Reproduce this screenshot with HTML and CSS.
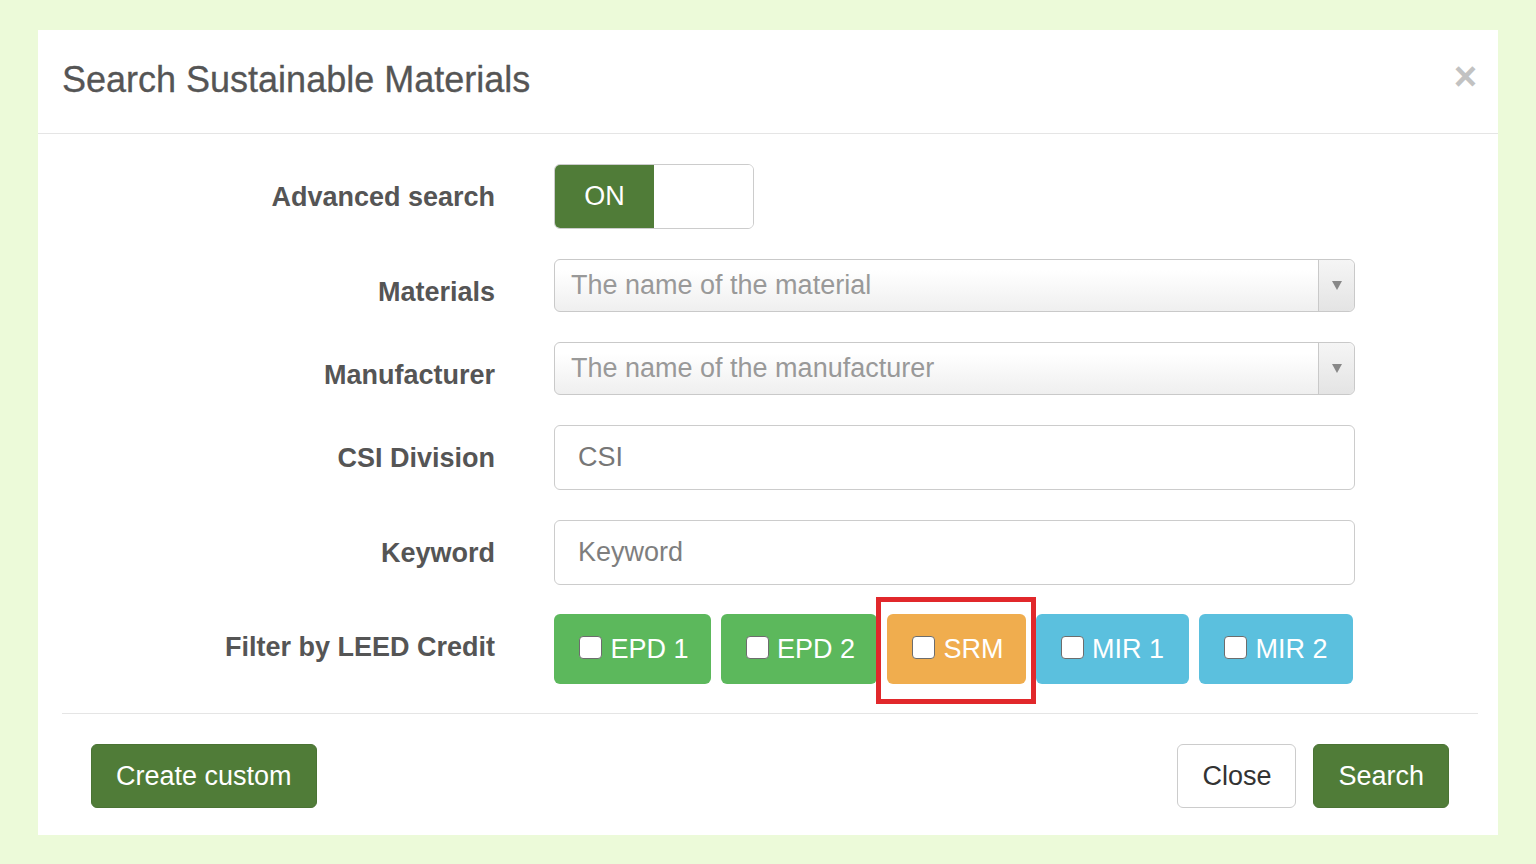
FILE: index.html
```html
<!DOCTYPE html>
<html>
<head>
<meta charset="utf-8">
<title>Search Sustainable Materials</title>
<link rel="stylesheet" href="styles.css">
</head>
<body>
<div class="modal">
  <div class="modal-header">
    <h4 class="modal-title">Search Sustainable Materials</h4>
    <span class="close">&times;</span>
  </div>

  <div class="modal-body">
    <div class="form-row">
      <label class="form-label">Advanced search</label>
      <div class="switch">
        <span class="switch-on">ON</span>
        <span class="switch-off"></span>
      </div>
    </div>

    <div class="form-row">
      <label class="form-label">Materials</label>
      <div class="select">
        <span class="select-text">The name of the material</span>
        <span class="select-arrow"><span class="caret"></span></span>
      </div>
    </div>

    <div class="form-row">
      <label class="form-label">Manufacturer</label>
      <div class="select">
        <span class="select-text">The name of the manufacturer</span>
        <span class="select-arrow"><span class="caret"></span></span>
      </div>
    </div>

    <div class="form-row">
      <label class="form-label">CSI Division</label>
      <input class="form-control" type="text" value="CSI">
    </div>

    <div class="form-row">
      <label class="form-label">Keyword</label>
      <input class="form-control" type="text" placeholder="Keyword">
    </div>

    <div class="form-row last">
      <label class="form-label">Filter by LEED Credit</label>
      <div class="filters">
        <label class="btn-check btn-success"><input type="checkbox"> EPD 1</label>
        <label class="btn-check btn-success"><input type="checkbox"> EPD 2</label>
        <label class="btn-check btn-warning marked"><input type="checkbox"> SRM</label>
        <label class="btn-check btn-info wide"><input type="checkbox"> MIR 1</label>
        <label class="btn-check btn-info wide"><input type="checkbox"> MIR 2</label>
      </div>
    </div>

    <hr class="divider">
  </div>

  <div class="modal-footer">
    <button class="btn btn-primary">Create custom</button>
    <div class="footer-right">
      <button class="btn btn-default">Close</button>
      <button class="btn btn-primary">Search</button>
    </div>
  </div>
</div>
</body>
</html>
```

FILE: styles.css
```css
/* Search dialog */

body
{ margin: 0;
background-color: #ecfad9;
font-family: "Liberation Sans", Arial, Helvetica, sans-serif;
font-size: 27px;
color: #555;
}

div.modal
{ margin: 30px 0 0 38px;
width: 1460px;
background-color: #fff;
}

div.modal-header
{ display: flex;
justify-content: space-between;
align-items: flex-start;
padding: 26px 21px 30px 24px;
border-bottom: 1px solid #e5e5e5;
}

h4.modal-title
{ margin: 0;
font-size: 36px;
font-weight: normal;
line-height: 47px;
color: #555;
-webkit-text-stroke: 0.3px #555;
}

span.close
{ font-size: 40px;
font-weight: bold;
line-height: 40px;
margin-top: 0;
color: #c2c2c2;
}

div.modal-body
{ padding-top: 30px;
}

div.form-row
{ display: flex;
align-items: flex-start;
margin-bottom: 30px;
}

div.form-row.last
{ margin-bottom: 0;
margin-top: -1px;
}

label.form-label
{ width: 457px;
margin-right: 59px;
padding-top: 18px;
line-height: 30px;
text-align: right;
font-weight: bold;
color: #555;
}

/* on/off switch */

div.switch
{ display: flex;
width: 198px;
height: 63px;
border: 1px solid #ccc;
border-radius: 6px;
overflow: hidden;
}

span.switch-on
{ width: 99px;
background-color: #507c38;
color: #fff;
display: flex;
align-items: center;
justify-content: center;
}

span.switch-off
{ flex: 1;
background-color: #fff;
}

/* select boxes */

div.select
{ display: flex;
width: 799px;
height: 51px;
border: 1px solid #c9c9c9;
border-radius: 6px;
background: linear-gradient(#fff 20%, #efefef);
}

span.select-text
{ flex: 1;
padding-left: 16px;
line-height: 51px;
color: #999;
}

span.select-arrow
{ width: 35px;
border-left: 1px solid #c9c9c9;
border-radius: 0 6px 6px 0;
background: linear-gradient(#f5f5f5, #e4e4e4);
display: flex;
align-items: center;
justify-content: center;
}

span.caret
{ width: 0;
height: 0;
border-left: 5px solid transparent;
border-right: 5px solid transparent;
border-top: 9px solid #888;
}

/* text inputs */

input.form-control
{ box-sizing: border-box;
width: 801px;
height: 65px;
padding: 0 23px;
border: 1px solid #ccc;
border-radius: 6px;
font-family: inherit;
font-size: 27px;
color: #777;
outline: none;
}

input.form-control::placeholder
{ color: #7e7e7e;
}

/* LEED credit filters */

div.filters
{ display: flex;
gap: 10px;
}

label.btn-check
{ position: relative;
display: flex;
align-items: center;
box-sizing: border-box;
height: 70px;
padding: 0 22px 0 25px;
border-radius: 6px;
color: #fff;
white-space: pre;
}

label.btn-check.wide
{ padding-right: 25px;
}

label.btn-check input
{ appearance: none;
-webkit-appearance: none;
box-sizing: border-box;
width: 23px;
height: 23px;
margin: 0 1px 4px 0;
border: 1.5px solid #6d6d6d;
border-radius: 4px;
background-color: #fff;
}

.btn-success { background-color: #5cb85c; }
.btn-warning { background-color: #f0ad4e; }
.btn-info { background-color: #5bc0de; }

label.marked::after
{ content: "";
position: absolute;
top: -17px;
left: -11px;
right: -10px;
bottom: -20px;
border: 5px solid #e1282b;
}

hr.divider
{ margin: 29px 20px 0 24px;
border: 0;
border-top: 1px solid #e5e5e5;
}

/* footer */

div.modal-footer
{ display: flex;
justify-content: space-between;
padding: 30px 49px 27px 53px;
}

div.footer-right
{ display: flex;
gap: 17px;
}

button.btn
{ height: 64px;
padding: 0 24px;
border: 1px solid transparent;
border-radius: 6px;
font-family: inherit;
font-size: 27px;
}

button.btn-primary
{ background-color: #507c38;
border-color: #4a7334;
color: #fff;
}

button.btn-default
{ background-color: #fff;
border-color: #ccc;
color: #333;
}
```
